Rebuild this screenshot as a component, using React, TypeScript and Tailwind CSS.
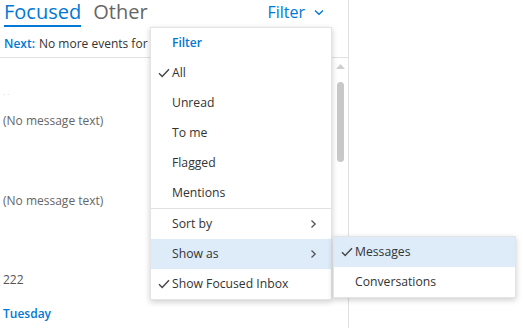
import React from "react";

const Check = () => (
  <svg width="12" height="10" viewBox="0 0 12 10" className="shrink-0">
    <path d="M1 5.2 L4.2 8.4 L11 1.2" fill="none" stroke="#444" strokeWidth="1.4" />
  </svg>
);

const Chevron = () => (
  <svg width="7" height="10" viewBox="0 0 7 10">
    <path d="M1.5 1.5 L5.2 5 L1.5 8.5" fill="none" stroke="#555" strokeWidth="1.3" />
  </svg>
);

type Item = { label: string; checked?: boolean; sub?: boolean; active?: boolean };

const filterItems: Item[] = [
  { label: "All", checked: true },
  { label: "Unread" },
  { label: "To me" },
  { label: "Flagged" },
  { label: "Mentions" },
];

const MenuRow = ({ item }: { item: Item }) => (
  <div
    className={`flex items-center h-[30px] pr-[14px] ${
      item.active ? "bg-[#deecf9]" : ""
    }`}
  >
    <div className="w-[21px] flex justify-end pr-[2px]">{item.checked && <Check />}</div>
    <span className="flex-1 text-[12.2px] text-[#333]">{item.label}</span>
    {item.sub && <Chevron />}
  </div>
);

const App: React.FC = () => {
  return (
    <div
      className="relative w-[523px] h-[328px] bg-white overflow-hidden"
      style={{ fontFamily: '"Segoe UI", "Open Sans", sans-serif' }}
    >
      <div className="flex h-full">
        {/* message list pane */}
        <div className="w-[349px] h-full border-r border-[#e1e1e1] flex flex-col">
          <div className="h-[30px] flex items-start pl-[4px] pr-[24px]">
            <div className="flex flex-col">
              <span className="text-[20px] leading-[27px] -mt-[2px] text-[#0078d4]">Focused</span>
              <div className="h-[2px] bg-[#0078d4]" />
            </div>
            <span className="ml-[12px] text-[20px] leading-[27px] -mt-[2px] text-[#666]">Other</span>
            <div className="ml-auto flex items-center gap-[9px] text-[#0078d4] h-[24px]">
              <span className="text-[16px] leading-[24px]">Filter</span>
              <svg width="10" height="7" viewBox="0 0 10 7">
                <path d="M1 1.5 L5 5.2 L9 1.5" fill="none" stroke="#0078d4" strokeWidth="1.4" />
              </svg>
            </div>
          </div>
          <div className="h-[28px] flex items-center pl-[4px] text-[12px] whitespace-nowrap overflow-hidden border-b border-[#e1e1e1]">
            <span className="font-semibold text-[#0078d4]">Next:</span>
            <span className="ml-[4px] text-[#333]">No more events for today</span>
          </div>
          <div className="flex flex-1">
            <div className="flex-1 pl-[3px] text-[12px] text-[#666] flex flex-col">
              <div className="h-[28px]" />
              <div className="h-[26px] text-[#c8d8e8] text-[8px]">.&nbsp;.</div>
              <div className="h-[80px]">(No message text)</div>
              <div className="h-[79px]">(No message text)</div>
              <div className="h-[34px] text-[#555]">222</div>
              <div className="text-[#0078d4] font-semibold text-[12px]">Tuesday</div>
            </div>
            <div className="w-[16px] flex flex-col items-center pt-[6px]">
              <svg width="9" height="5" viewBox="0 0 9 5">
                <path d="M0 5 L4.5 0 L9 5 Z" fill="#cfcfcf" />
              </svg>
              <div className="mt-[13px] w-[7px] h-[80px] rounded-full bg-[#c8c8c8]" />
            </div>
          </div>
        </div>
        <div className="flex-1" />
      </div>

      {/* filter menu */}
      <div className="absolute left-[150px] top-[27px] w-[182px] bg-white border border-[#e4e4e4] shadow-[0_2px_6px_rgba(0,0,0,0.2)]">
        <div className="h-[30px] flex items-center pl-[21px] text-[12px] font-semibold text-[#0078d4]">
          Filter
        </div>
        {filterItems.map((it) => (
          <MenuRow key={it.label} item={it} />
        ))}
        <div className="h-px bg-[#e1e1e1]" />
        <MenuRow item={{ label: "Sort by", sub: true }} />
        <MenuRow item={{ label: "Show as", sub: true, active: true }} />
        <MenuRow item={{ label: "Show Focused Inbox", checked: true }} />
      </div>

      {/* show as submenu */}
      <div className="absolute left-[333px] top-[236px] w-[183px] bg-white border border-[#e4e4e4] shadow-[0_2px_6px_rgba(0,0,0,0.2)]">
        <MenuRow item={{ label: "Messages", checked: true, active: true }} />
        <MenuRow item={{ label: "Conversations" }} />
      </div>
    </div>
  );
};

export default App;
